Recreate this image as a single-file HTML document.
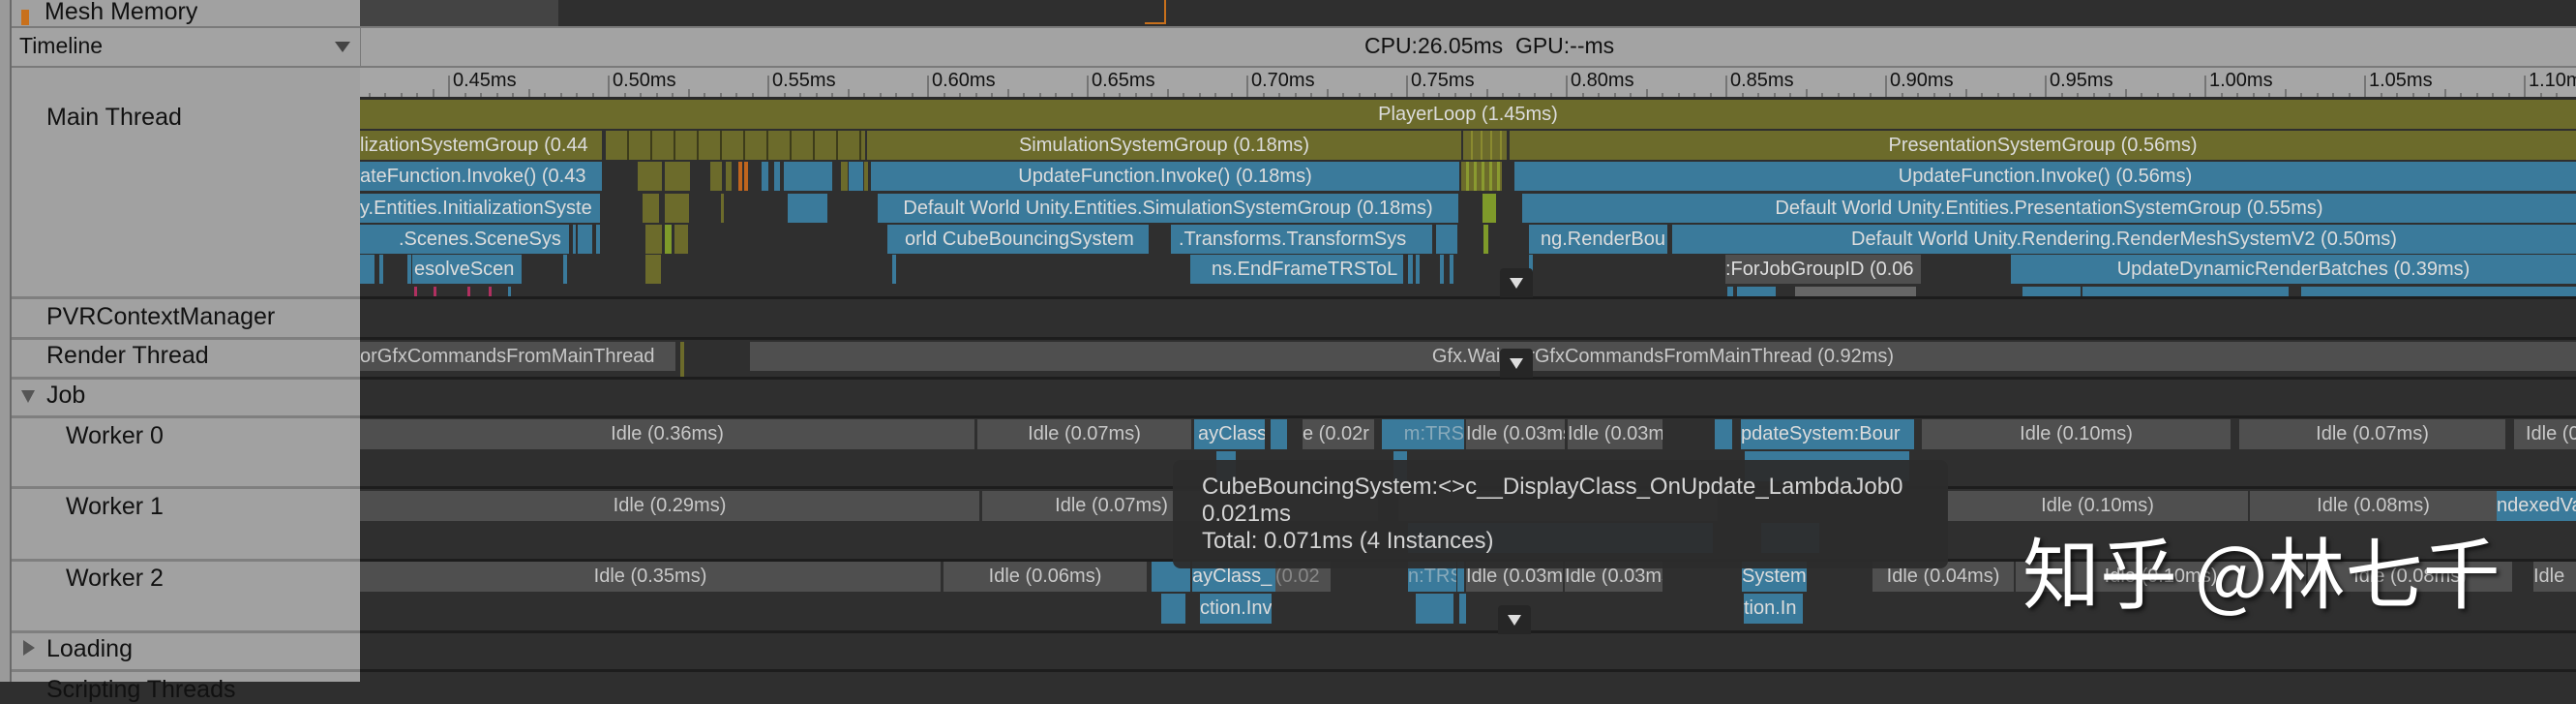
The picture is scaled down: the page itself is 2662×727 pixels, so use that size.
<!DOCTYPE html>
<html><head><meta charset="utf-8"><style>
*{margin:0;padding:0;box-sizing:border-box}
body{width:2662px;height:704px;overflow:hidden;background:#2f2f2f;position:relative;font-family:"Liberation Sans","Noto Sans CJK SC",sans-serif}
div{position:absolute}
.l{color:#111;font-size:25px;white-space:nowrap}
.b{height:30px;line-height:30px;font-size:20px;color:#dcdcdc;white-space:nowrap;overflow:hidden;text-align:center}
.o{background:#6c6b2b}
.u{background:#3a7a9b}
.g{background:#4f4f4f;color:#c8c8c8}
.w{height:31px;line-height:31px}
.sep{height:3px;background:#1d1d1d;left:372px;width:2290px}
.lsep{height:3px;background:#7f7f7f;left:12px;width:360px}
.rl{font-size:20px;color:#111;top:72px}
.tri{width:34px;height:30px;background:#262626;border-radius:4px 4px 0 0}
.tri:after{content:"";position:absolute;left:10px;top:10px;border-left:7px solid transparent;border-right:7px solid transparent;border-top:11px solid #ddd}
</style></head><body>
<div style="left:0;top:0;width:12px;height:704px;background:#9a9a9a;border-right:2px solid #6a6a6a"></div>
<div style="left:12px;top:0;width:360px;height:704px;background:#a1a1a1"></div>
<div style="left:372px;top:0;width:2290px;height:27px;background:#2f2f2f"></div>
<div style="left:372px;top:0;width:205px;height:27px;background:#444"></div>
<div style="left:1203px;top:0;width:2px;height:25px;background:#c8701c"></div>
<div style="left:1183px;top:23px;width:20px;height:2px;background:#c8701c"></div>
<div style="left:22px;top:10px;width:8px;height:16px;background:#c8701c"></div>
<div class="l" style="left:46px;top:-2px;font-size:25px;height:27px;overflow:hidden">Mesh Memory</div>
<div style="left:12px;top:27px;width:2650px;height:2px;background:#7a7a7a"></div>
<div style="left:12px;top:29px;width:2650px;height:39px;background:#a3a3a3"></div>
<div style="left:372px;top:29px;width:1px;height:39px;background:#7a7a7a"></div>
<div class="l" style="left:20px;top:34px;font-size:23px">Timeline</div>
<div style="left:346px;top:43px;border-left:8px solid transparent;border-right:8px solid transparent;border-top:11px solid #444"></div>
<div class="l" style="left:1410px;top:34px;font-size:23px">CPU:26.05ms &nbsp;GPU:--ms</div>
<div style="left:12px;top:68px;width:2650px;height:2px;background:#7a7a7a"></div>
<div style="left:372px;top:70px;width:2290px;height:32px;background:#a6a6a6"></div>
<svg width="2290" height="33" style="position:absolute;left:372px;top:70px">
<g stroke="#555" stroke-width="1.2">
<path d="M92 8V31M257 8V31M422 8V31M587 8V31M752 8V31M917 8V31M1082 8V31M1247 8V31M1412 8V31M1577 8V31M1742 8V31M1907 8V31M2072 8V31M2237 8V31"/>
<path d="M10 26V31M26 26V31M43 26V31M59 26V31M76 22V31M109 26V31M125 26V31M142 26V31M158 26V31M175 22V31M191 26V31M208 26V31M224 26V31M241 26V31M274 26V31M290 26V31M307 26V31M323 26V31M340 22V31M356 26V31M373 26V31M389 26V31M406 26V31M439 26V31M455 26V31M472 26V31M488 26V31M505 22V31M521 26V31M538 26V31M554 26V31M571 26V31M604 26V31M620 26V31M637 26V31M653 26V31M670 22V31M686 26V31M703 26V31M719 26V31M736 26V31M769 26V31M785 26V31M802 26V31M818 26V31M835 22V31M851 26V31M868 26V31M884 26V31M901 26V31M934 26V31M950 26V31M967 26V31M983 26V31M1000 22V31M1016 26V31M1033 26V31M1049 26V31M1066 26V31M1099 26V31M1115 26V31M1132 26V31M1148 26V31M1165 22V31M1181 26V31M1198 26V31M1214 26V31M1231 26V31M1264 26V31M1280 26V31M1297 26V31M1313 26V31M1330 22V31M1346 26V31M1363 26V31M1379 26V31M1396 26V31M1429 26V31M1445 26V31M1462 26V31M1478 26V31M1495 22V31M1511 26V31M1528 26V31M1544 26V31M1561 26V31M1594 26V31M1610 26V31M1627 26V31M1643 26V31M1660 22V31M1676 26V31M1693 26V31M1709 26V31M1726 26V31M1759 26V31M1775 26V31M1792 26V31M1808 26V31M1825 22V31M1841 26V31M1858 26V31M1874 26V31M1891 26V31M1924 26V31M1940 26V31M1957 26V31M1973 26V31M1990 22V31M2006 26V31M2023 26V31M2039 26V31M2056 26V31M2089 26V31M2105 26V31M2122 26V31M2138 26V31M2155 22V31M2171 26V31M2188 26V31M2204 26V31M2221 26V31M2254 26V31M2270 26V31"/>
</g></svg>
<div style="left:372px;top:100px;width:2290px;height:3px;background:#2a2a2a"></div>
<div class="rl" style="left:468px">0.45ms</div><div class="rl" style="left:633px">0.50ms</div><div class="rl" style="left:798px">0.55ms</div><div class="rl" style="left:963px">0.60ms</div><div class="rl" style="left:1128px">0.65ms</div><div class="rl" style="left:1293px">0.70ms</div><div class="rl" style="left:1458px">0.75ms</div><div class="rl" style="left:1623px">0.80ms</div><div class="rl" style="left:1788px">0.85ms</div><div class="rl" style="left:1953px">0.90ms</div><div class="rl" style="left:2118px">0.95ms</div><div class="rl" style="left:2283px">1.00ms</div><div class="rl" style="left:2448px">1.05ms</div><div class="rl" style="left:2613px">1.10ms</div>

<div class="l" style="left:48px;top:107px">Main Thread</div>
<div class="lsep" style="top:306px"></div>
<div class="l" style="left:48px;top:313px">PVRContextManager</div>
<div class="lsep" style="top:389px"></div>
<div class="l" style="left:48px;top:353px">Render Thread</div>
<div class="lsep" style="top:348px"></div>
<div style="left:22px;top:403px;border-left:7px solid transparent;border-right:7px solid transparent;border-top:13px solid #555"></div>
<div class="l" style="left:48px;top:394px">Job</div>
<div class="lsep" style="top:429px"></div>
<div class="l" style="left:68px;top:436px">Worker 0</div>
<div class="lsep" style="top:502px"></div>
<div class="l" style="left:68px;top:509px">Worker 1</div>
<div class="lsep" style="top:577px"></div>
<div class="l" style="left:68px;top:583px">Worker 2</div>
<div class="lsep" style="top:651px"></div>
<div style="left:24px;top:661px;border-top:8px solid transparent;border-bottom:8px solid transparent;border-left:12px solid #555"></div>
<div class="l" style="left:48px;top:656px">Loading</div>
<div class="lsep" style="top:691px"></div>
<div class="l" style="left:48px;top:698px">Scripting Threads</div>

<div class="sep" style="top:306px"></div>
<div class="sep" style="top:348px"></div>
<div class="sep" style="top:389px"></div>
<div class="sep" style="top:429px"></div>
<div class="sep" style="top:502px"></div>
<div class="sep" style="top:577px"></div>
<div class="sep" style="top:651px"></div>
<div class="sep" style="top:691px"></div>

<div class="b o" style="left:372px;top:103px;width:2290px">PlayerLoop (1.45ms)</div>
<div class="b o" style="left:372px;top:135px;width:250px;text-align:left">lizationSystemGroup (0.44</div>
<div class="b o" style="left:626px;top:135px;width:268px;background:repeating-linear-gradient(90deg,#6c6b2b 0 22px,#3d3c1a 22px 24px)"></div>
<div class="b o" style="left:896px;top:135px;width:614px">SimulationSystemGroup (0.18ms)</div>
<div class="b o" style="left:1512px;top:135px;width:45px;background:repeating-linear-gradient(90deg,#6c6b2b 0 8px,#8a8a30 8px 10px)"></div>
<div class="b o" style="left:1560px;top:135px;width:1102px">PresentationSystemGroup (0.56ms)</div>

<div class="b u" style="left:372px;top:167px;width:250px;text-align:left">ateFunction.Invoke() (0.43</div>
<div class="b o" style="left:659px;top:167px;width:25px"></div><div class="b o" style="left:687px;top:167px;width:26px"></div>
<div class="b o" style="left:734px;top:167px;width:12px"></div><div class="b o" style="left:750px;top:167px;width:6px"></div>
<div class="b" style="left:763px;top:167px;width:4px;background:#c0651e"></div><div class="b" style="left:769px;top:167px;width:4px;background:#c0651e"></div>
<div class="b u" style="left:787px;top:167px;width:7px"></div><div class="b u" style="left:800px;top:167px;width:6px"></div>
<div class="b u" style="left:810px;top:167px;width:50px"></div><div class="b o" style="left:869px;top:167px;width:7px"></div>
<div class="b u" style="left:877px;top:167px;width:15px"></div><div class="b o" style="left:893px;top:167px;width:4px"></div>
<div class="b u" style="left:900px;top:167px;width:608px">UpdateFunction.Invoke() (0.18ms)</div>
<div class="b o" style="left:1510px;top:167px;width:42px;background:repeating-linear-gradient(90deg,#6c6b2b 0 5px,#8a9a30 5px 8px)"></div>
<div class="b u" style="left:1565px;top:167px;width:1097px">UpdateFunction.Invoke() (0.56ms)</div>

<div class="b u" style="left:372px;top:200px;width:248px;text-align:left">y.Entities.InitializationSyste</div>
<div class="b o" style="left:664px;top:200px;width:17px"></div><div class="b o" style="left:687px;top:200px;width:25px"></div>
<div class="b o" style="left:745px;top:200px;width:3px"></div><div class="b u" style="left:814px;top:200px;width:41px"></div>
<div class="b u" style="left:907px;top:200px;width:600px">Default World Unity.Entities.SimulationSystemGroup (0.18ms)</div>
<div class="b o" style="left:1532px;top:200px;width:14px;background:#7e9a2a"></div>
<div class="b u" style="left:1573px;top:200px;width:1089px">Default World Unity.Entities.PresentationSystemGroup (0.55ms)</div>

<div class="b u" style="left:372px;top:232px;width:216px;padding-left:40px;text-align:left">.Scenes.SceneSys</div>
<div class="b u" style="left:592px;top:232px;width:3px"></div><div class="b u" style="left:597px;top:232px;width:15px"></div><div class="b u" style="left:616px;top:232px;width:4px"></div>
<div class="b o" style="left:667px;top:232px;width:17px"></div><div class="b" style="left:687px;top:232px;width:7px;background:#7e9a2a"></div><div class="b o" style="left:697px;top:232px;width:14px"></div>
<div class="b u" style="left:917px;top:232px;width:270px;padding-left:18px;text-align:left">orld CubeBouncingSystem</div>
<div class="b u" style="left:1210px;top:232px;width:270px;padding-left:8px;text-align:left">.Transforms.TransformSys</div>
<div class="b u" style="left:1484px;top:232px;width:22px"></div><div class="b o" style="left:1533px;top:232px;width:5px;background:#7e9a2a"></div>
<div class="b u" style="left:1580px;top:232px;width:143px;padding-left:12px;text-align:left">ng.RenderBou</div>
<div class="b u" style="left:1728px;top:232px;width:934px">Default World Unity.Rendering.RenderMeshSystemV2 (0.50ms)</div>

<div class="b u" style="left:372px;top:263px;width:15px"></div><div class="b u" style="left:392px;top:263px;width:4px"></div><div class="b u" style="left:421px;top:263px;width:4px"></div>
<div class="b u" style="left:426px;top:263px;width:113px;text-align:left;padding-left:2px">esolveScen</div>
<div class="b u" style="left:582px;top:263px;width:4px"></div><div class="b o" style="left:667px;top:263px;width:16px"></div>
<div class="b u" style="left:922px;top:263px;width:4px"></div>
<div class="b u" style="left:1230px;top:263px;width:220px;padding-left:22px;text-align:left">ns.EndFrameTRSToL</div>
<div class="b u" style="left:1455px;top:263px;width:5px"></div><div class="b u" style="left:1463px;top:263px;width:4px"></div><div class="b u" style="left:1488px;top:263px;width:4px"></div><div class="b u" style="left:1498px;top:263px;width:4px"></div>
<div class="b u" style="left:1580px;top:263px;width:4px"></div>
<div class="b g" style="left:1783px;top:263px;width:202px;text-align:left;color:#ddd">:ForJobGroupID (0.06</div>
<div class="b u" style="left:2078px;top:263px;width:584px">UpdateDynamicRenderBatches (0.39ms)</div>
<div class="b u" style="left:1785px;top:296px;width:6px;height:10px"></div>
<div class="b u" style="left:1795px;top:296px;width:40px;height:10px"></div>
<div class="b g" style="left:1855px;top:296px;width:125px;height:10px;background:#666"></div>
<div class="b u" style="left:2090px;top:296px;width:60px;height:10px"></div>
<div class="b u" style="left:2152px;top:296px;width:213px;height:10px"></div>
<div class="b u" style="left:2378px;top:296px;width:284px;height:10px"></div>
<div class="b" style="left:428px;top:296px;width:3px;height:10px;background:#b03060"></div>
<div class="b" style="left:448px;top:296px;width:3px;height:10px;background:#b03060"></div>
<div class="b" style="left:483px;top:296px;width:3px;height:10px;background:#b03060"></div>
<div class="b" style="left:505px;top:296px;width:3px;height:10px;background:#b03060"></div>
<div class="b u" style="left:525px;top:296px;width:3px;height:10px"></div>
<div class="tri" style="left:1550px;top:277px"></div>

<div class="b g" style="left:372px;top:353px;width:326px;text-align:left">orGfxCommandsFromMainThread</div>
<div class="b o" style="left:703px;top:353px;width:4px;height:36px"></div>
<div class="b g" style="left:775px;top:353px;width:1887px">Gfx.WaitForGfxCommandsFromMainThread (0.92ms)</div>
<div class="tri" style="left:1550px;top:360px"></div>

<div class="b g w" style="left:372px;top:433px;width:635px">Idle (0.36ms)</div>
<div class="b g w" style="left:1010px;top:433px;width:221px">Idle (0.07ms)</div>
<div class="b u w" style="left:1234px;top:433px;width:73px;text-align:left;padding-left:4px">ayClass_</div>
<div class="b u w" style="left:1313px;top:433px;width:17px"></div>
<div class="b g w" style="left:1346px;top:433px;width:74px;text-align:left">e (0.02r</div>
<div class="b u w" style="left:1428px;top:433px;width:85px;text-align:right;color:#8ab">m:TRS</div>
<div class="b g w" style="left:1515px;top:433px;width:102px;text-align:left">Idle (0.03ms</div>
<div class="b g w" style="left:1620px;top:433px;width:98px;text-align:left">Idle (0.03ms</div>
<div class="b u w" style="left:1772px;top:433px;width:18px"></div>
<div class="b u w" style="left:1799px;top:433px;width:179px;text-align:left">pdateSystem:Bour</div>
<div class="b g w" style="left:1986px;top:433px;width:319px">Idle (0.10ms)</div>
<div class="b g w" style="left:2314px;top:433px;width:275px">Idle (0.07ms)</div>
<div class="b g w" style="left:2598px;top:433px;width:64px;text-align:left;padding-left:12px">Idle (0</div>
<div class="b u w" style="left:1257px;top:466px;width:20px"></div>
<div class="b u w" style="left:1440px;top:466px;width:14px"></div>
<div class="b u w" style="left:1803px;top:466px;width:170px"></div>
<div class="b g w" style="left:372px;top:507px;width:640px">Idle (0.29ms)</div>
<div class="b g w" style="left:1015px;top:507px;width:267px">Idle (0.07ms)</div>
<div class="b g w" style="left:1284px;top:507px;width:140px"></div>
<div class="b g w" style="left:1445px;top:507px;width:330px"></div>
<div class="b g w" style="left:2012px;top:507px;width:311px">Idle (0.10ms)</div>
<div class="b g w" style="left:2325px;top:507px;width:255px">Idle (0.08ms)</div>
<div class="b u w" style="left:2580px;top:507px;width:82px;text-align:left">ndexedVa</div>
<div class="b u w" style="left:1455px;top:540px;width:315px"></div>
<div class="b u w" style="left:1820px;top:540px;width:60px"></div>
<div class="b g w" style="left:372px;top:580px;width:600px">Idle (0.35ms)</div>
<div class="b g w" style="left:975px;top:580px;width:210px">Idle (0.06ms)</div>
<div class="b u w" style="left:1190px;top:580px;width:40px"></div>
<div class="b u w" style="left:1232px;top:580px;width:86px;text-align:left">ayClass_</div>
<div class="b g w" style="left:1318px;top:580px;width:57px;text-align:left;color:#888">(0.02</div>
<div class="b u w" style="left:1455px;top:580px;width:50px;text-align:left;color:#8ab">n:TRS</div>
<div class="b u w" style="left:1506px;top:580px;width:7px"></div>
<div class="b g w" style="left:1515px;top:580px;width:100px;text-align:left">Idle (0.03ms</div>
<div class="b g w" style="left:1617px;top:580px;width:101px;text-align:left">Idle (0.03ms</div>
<div class="b u w" style="left:1800px;top:580px;width:67px;text-align:left">System</div>
<div class="b g w" style="left:1935px;top:580px;width:146px">Idle (0.04ms)</div>
<div class="b g w" style="left:2083px;top:580px;width:300px">Idle (0.10ms)</div>
<div class="b g w" style="left:2385px;top:580px;width:211px">Idle (0.08ms)</div>
<div class="b g w" style="left:2618px;top:580px;width:44px;text-align:left">Idle</div>
<div class="b u w" style="left:1200px;top:613px;width:25px"></div>
<div class="b u w" style="left:1240px;top:613px;width:74px;text-align:left">ction.Inv</div>
<div class="b u w" style="left:1463px;top:613px;width:39px"></div>
<div class="b u w" style="left:1508px;top:613px;width:7px"></div>
<div class="b u w" style="left:1802px;top:613px;width:61px;text-align:left">tion.In</div>
<div class="tri" style="left:1548px;top:625px"></div>

<div style="left:1212px;top:475px;width:801px;height:112px;background:rgba(44,44,44,0.95);border-radius:8px;color:#d4d4d4;font-size:24px;line-height:28px;padding:14px 0 0 30px;white-space:nowrap">CubeBouncingSystem:&lt;&gt;c__DisplayClass_OnUpdate_LambdaJob0<br>0.021ms<br>Total: 0.071ms (4 Instances)</div>

<div style="left:2090px;top:540px;font-size:80px;line-height:96px;color:#fff;white-space:nowrap;text-shadow:3px 3px 4px rgba(0,0,0,0.6);font-family:'Noto Sans CJK SC','WenQuanYi Zen Hei',sans-serif">知乎 @林七千</div>
</body></html>
